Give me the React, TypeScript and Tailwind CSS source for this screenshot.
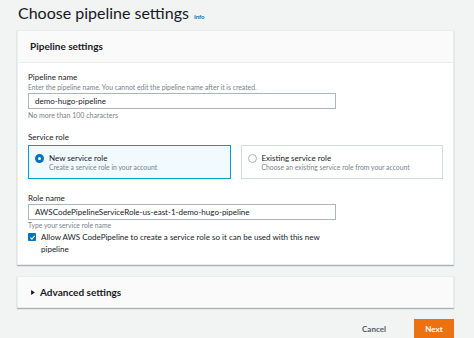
import React from 'react';

const font = { fontFamily: 'Lato, "Liberation Sans", sans-serif' };

const Radio = ({ checked }: { checked: boolean }) =>
  checked ? (
    <span className="mt-[1px] w-[9px] h-[9px] rounded-full border-[3px] border-[#0073bb] bg-white shrink-0" />
  ) : (
    <span className="mt-[1px] w-[9px] h-[9px] rounded-full border border-[#aab7b8] bg-white shrink-0" />
  );

const App: React.FC = () => {
  return (
    <div className="w-[474px] h-[338px] overflow-hidden bg-[#f2f3f3] text-[#16191f] pl-[17px] pr-[20px]" style={font}>
      {/* title */}
      <div className="h-[30px] flex items-baseline gap-[5px] pl-[1px]">
        <h1 className="text-[16px] leading-[26px] text-[#16191f]">Choose pipeline settings</h1>
        <span className="text-[6px] font-bold text-[#0073bb]">Info</span>
      </div>

      {/* pipeline settings card */}
      <div className="bg-white border border-[#eaeded] shadow-[0_1px_1px_rgba(0,28,36,0.3)]">
        <div className="h-[32px] bg-[#fafafa] border-b border-[#eaeded] px-[12px] flex items-center">
          <h2 className="text-[10px] font-bold">Pipeline settings</h2>
        </div>

        <div className="px-[10px] pt-[9px] pb-[9px]">
          <div className="text-[8px] leading-[11px]">Pipeline name</div>
          <div className="text-[6.8px] leading-[9px] text-[#79828a]">
            Enter the pipeline name. You cannot edit the pipeline name after it is created.
          </div>
          <div className="mt-[1px] w-[308px] h-[16px] border border-[#aab7b8] flex items-center px-[6px] text-[8px]">
            demo-hugo-pipeline
          </div>
          <div className="mt-[2px] text-[7px] leading-[9px] text-[#79828a]">No more than 100 characters</div>

          <div className="mt-[12px] text-[8px] leading-[11px]">Service role</div>
          <div className="mt-[2px] grid grid-cols-2 gap-[10px]">
            <div className="h-[34px] border border-[#00a1c9] bg-[#f1faff] flex gap-[5px] px-[6px] pt-[7px]">
              <Radio checked />
              <div>
                <div className="text-[8px] leading-[10px]">New service role</div>
                <div className="text-[6.8px] leading-[9px] text-[#79828a]">Create a service role in your account</div>
              </div>
            </div>
            <div className="h-[34px] border border-[#d5dbdb] bg-white flex gap-[5px] px-[6px] pt-[7px]">
              <Radio checked={false} />
              <div>
                <div className="text-[8px] leading-[10px]">Existing service role</div>
                <div className="text-[6.8px] leading-[9px] text-[#79828a]">Choose an existing service role from your account</div>
              </div>
            </div>
          </div>

          <div className="mt-[14px] text-[8px] leading-[11px]">Role name</div>
          <div className="mt-[0px] w-[308px] h-[16px] border border-[#aab7b8] flex items-center px-[6px] text-[8px]">
            AWSCodePipelineServiceRole-us-east-1-demo-hugo-pipeline
          </div>
          <div className="mt-[1px] text-[6.8px] leading-[9px] text-[#79828a]">Type your service role name</div>
          <div className="mt-[1px] flex gap-[5px]">
            <span className="mt-[2px] w-[8px] h-[8px] rounded-[1px] bg-[#0073bb] flex items-center justify-center shrink-0">
              <svg viewBox="0 0 10 10" className="w-[7px] h-[7px]">
                <polyline points="2,5.2 4.2,7.3 8,2.8" fill="none" stroke="white" strokeWidth="1.6" />
              </svg>
            </span>
            <div className="text-[8px] leading-[12px] w-[296px]">
              Allow AWS CodePipeline to create a service role so it can be used with this new pipeline
            </div>
          </div>
        </div>
      </div>

      {/* advanced settings */}
      <div className="mt-[11px] h-[32px] bg-[#fafafa] border border-[#eaeded] shadow-[0_1px_1px_rgba(0,28,36,0.3)] flex items-center gap-[5px] px-[13px]">
        <svg viewBox="0 0 6 8" className="w-[4px] h-[5px]">
          <polygon points="0,0 6,4 0,8" fill="#16191f" />
        </svg>
        <span className="text-[10px] font-bold">Advanced settings</span>
      </div>

      {/* actions */}
      <div className="mt-[11px] flex justify-end items-center gap-[16px]">
        <span className="text-[8px] font-bold text-[#545b64] px-[12px]">Cancel</span>
        <span className="h-[20px] w-[40px] bg-[#ec7211] text-white text-[8px] font-bold flex items-center justify-center">
          Next
        </span>
      </div>
    </div>
  );
};

export default App;
